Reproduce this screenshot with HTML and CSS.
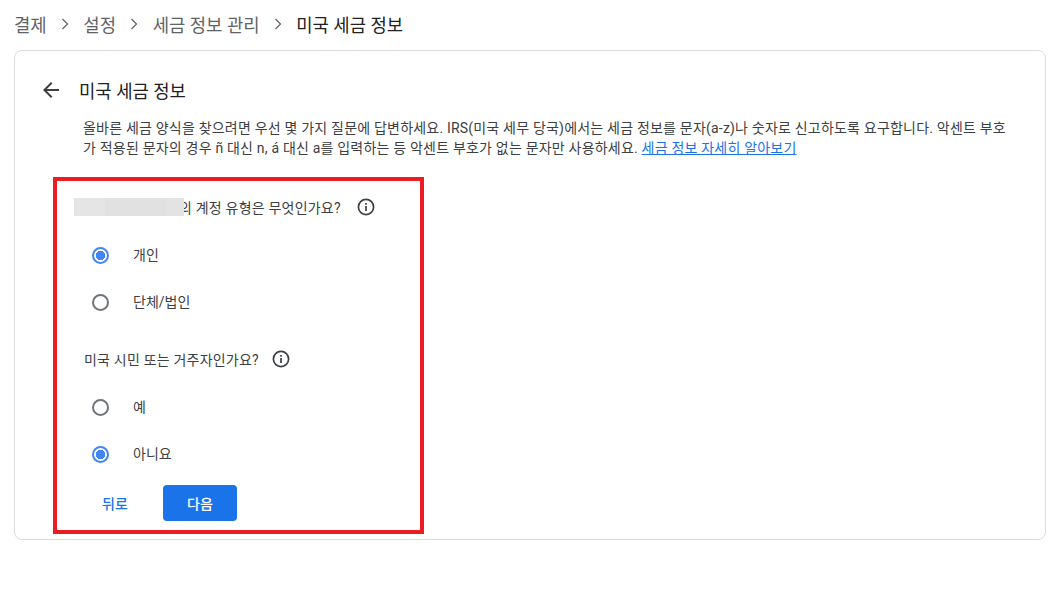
FILE: index.html
```html
<!DOCTYPE html>
<html lang="ko">
<head>
    <meta charset="UTF-8">
    <title>미국 세금 정보</title>
    <link rel="stylesheet" href="styles.css">
</head>
<body>
    <nav class="breadcrumb">
        <span>결제</span>
        <svg class="crumb-sep" viewBox="0 0 10 14"><path d="M2.5 2 L7.5 7 L2.5 12" fill="none" stroke="#5f6368" stroke-width="1.2"/></svg>
        <span>설정</span>
        <svg class="crumb-sep" viewBox="0 0 10 14"><path d="M2.5 2 L7.5 7 L2.5 12" fill="none" stroke="#5f6368" stroke-width="1.2"/></svg>
        <span>세금 정보 관리</span>
        <svg class="crumb-sep" viewBox="0 0 10 14"><path d="M2.5 2 L7.5 7 L2.5 12" fill="none" stroke="#5f6368" stroke-width="1.2"/></svg>
        <span class="current">미국 세금 정보</span>
    </nav>

    <main class="card">
        <div class="card-head">
            <svg class="back-icon" viewBox="0 0 24 24"><path d="M20 11H7.83l5.59-5.59L12 4l-8 8 8 8 1.41-1.41L7.83 13H20v-2z" fill="#3c4043"/></svg>
            <h1>미국 세금 정보</h1>
        </div>
        <p class="intro">올바른 세금 양식을 찾으려면 우선 몇 가지 질문에 답변하세요. IRS(미국 세무 당국)에서는 세금 정보를 문자(a-z)나 숫자로 신고하도록 요구합니다. 악센트 부호가 적용된 문자의 경우 ñ 대신 n, á 대신 a를 입력하는 등 악센트 부호가 없는 문자만 사용하세요. <a href="#">세금 정보 자세히 알아보기</a></p>

        <form class="tax-form">
            <div class="question first">
                <span class="redacted"></span><span class="question-text">의 계정 유형은 무엇인가요?</span>
                <svg class="info-icon" viewBox="0 0 20 20"><circle cx="10" cy="10" r="7.6" fill="none" stroke="#3c4043" stroke-width="1.7"/><rect x="9.15" y="9" width="1.7" height="5" fill="#3c4043"/><rect x="9.15" y="6" width="1.7" height="1.7" fill="#3c4043"/></svg>
            </div>
            <div class="option"><span class="radio checked"></span><span class="option-label">개인</span></div>
            <div class="option"><span class="radio"></span><span class="option-label">단체/법인</span></div>

            <div class="question second">
                <span class="question-text">미국 시민 또는 거주자인가요?</span>
                <svg class="info-icon" viewBox="0 0 20 20"><circle cx="10" cy="10" r="7.6" fill="none" stroke="#3c4043" stroke-width="1.7"/><rect x="9.15" y="9" width="1.7" height="5" fill="#3c4043"/><rect x="9.15" y="6" width="1.7" height="1.7" fill="#3c4043"/></svg>
            </div>
            <div class="option"><span class="radio"></span><span class="option-label">예</span></div>
            <div class="option"><span class="radio checked"></span><span class="option-label">아니요</span></div>

            <div class="actions">
                <button type="button" class="btn-text">뒤로</button>
                <button type="button" class="btn-primary">다음</button>
            </div>
        </form>
    </main>
</body>
</html>
```

FILE: styles.css
```css
* { box-sizing: border-box; }
body { margin: 0; background: #fff; color: #202124; font-family: Roboto, "Noto Sans CJK KR", sans-serif; font-size: 14px; }

.breadcrumb { display: flex; align-items: center; height: 50px; padding: 0 0 3px 14px; font-size: 17.8px; color: #5f6368; }
.breadcrumb .current { color: #202124; }
.crumb-sep { width: 10px; height: 14px; margin: 0 13.3px; }

.card { width: 1032px; height: 490px; margin-left: 14px; padding: 23px 0 0 24px; border: 1px solid #dadce0; border-radius: 8px; }
.card-head { display: flex; align-items: center; height: 32px; }
.back-icon { width: 24px; height: 24px; margin-right: 16px; }
.card-head h1 { margin: 0; font-size: 17.8px; font-weight: 400; }

.intro { width: 926px; margin: 12px 0 0 44px; line-height: 20px; letter-spacing: 0.2px; color: #3c4043; }
.intro a { color: #1a73e8; }

.tax-form { width: 371px; height: 357px; margin: 19px 0 0 14px; border: 4px solid #ed1c24; }

.question { display: flex; align-items: center; height: 18px; padding-left: 27px; color: #3c4043; letter-spacing: 0.2px; }
.question.first { margin-top: 17px; padding-left: 17px; }
.question.second { margin-top: 24px; }
.question.second .info-icon { margin-left: 12px; }
.redacted { position: relative; z-index: 1; width: 110px; height: 18px; margin-right: -5px; background: linear-gradient(90deg, #e6e5e5 0 31px, #e2e1e1 31px 93px, #e4e2e2 93px); }
.info-icon { width: 20px; height: 20px; margin-left: 15px; }

.option { display: flex; align-items: center; height: 47px; padding-left: 35px; color: #3c4043; }
.question + .option { margin-top: 16px; }
.option-label { margin-bottom: 4px; }
.radio { width: 17px; height: 17px; margin-right: 24px; border: 2px solid #70757a; border-radius: 50%; }
.radio.checked { border-color: #4285f4; background: radial-gradient(circle, #4285f4 0 4.5px, transparent 5px); }

.actions { display: flex; align-items: center; gap: 20px; margin-top: 7px; padding-left: 30px; }
.btn-text { padding: 0; width: 56px; height: 36px; border: none; background: none; color: #1a73e8; font: inherit; font-weight: 500; }
.btn-primary { width: 74px; height: 36px; border: none; border-radius: 4px; background: #1a73e8; color: #fff; font: inherit; font-weight: 500; }
```
